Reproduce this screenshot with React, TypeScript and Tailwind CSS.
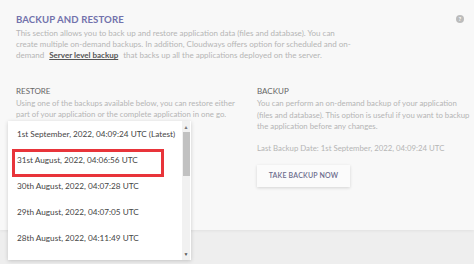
import { useState } from "react";

type Backup = {
  id: number;
  label: string;
};

const backups: Backup[] = [
  { id: 1, label: "1st September, 2022, 04:09:24 UTC (Latest)" },
  { id: 2, label: "31st August, 2022, 04:06:56 UTC" },
  { id: 3, label: "30th August, 2022, 04:07:28 UTC" },
  { id: 4, label: "29th August, 2022, 04:07:05 UTC" },
  { id: 5, label: "28th August, 2022, 04:11:49 UTC" },
];

const font = { fontFamily: "Lato, 'Open Sans', sans-serif" };

const BackupDropdown = () => {
  const [selected] = useState(2);

  return (
    <div className="absolute left-[8px] top-[121px] w-[183px] h-[139px] bg-white shadow-[0_1px_4px_rgba(0,0,0,0.18)] flex">
      <ul className="flex-1 flex flex-col">
        {backups.map((b) => (
          <li
            key={b.id}
            className="relative h-[26px] flex items-center pl-[9px] text-[8.2px] text-[#454545] whitespace-nowrap"
          >
            {b.label}
            {b.id === selected && (
              <span className="absolute left-[4px] top-[2px] w-[152px] h-[28px] border-[3px] border-[#e8343a]" />
            )}
          </li>
        ))}
      </ul>
      <div className="w-[8px] mr-[1px] bg-[#f1f1f1] flex flex-col items-center">
        <span className="mt-[4px] text-[5px] leading-none text-[#777]">▲</span>
        <div className="mt-[2px] w-[7px] h-[44px] bg-[#c1c1c1]" />
        <div className="flex-1" />
        <span className="mb-[3px] text-[5px] leading-none text-[#555]">▼</span>
      </div>
    </div>
  );
};

const App = () => {
  return (
    <div className="relative w-[474px] h-[264px] bg-[#eeeeee] overflow-hidden" style={font}>
      <div className="h-[230px] bg-[#f8f8f8] shadow-[0_1px_3px_rgba(0,0,0,0.06)] pl-4 pt-[13px]">
        <div className="flex items-start justify-between pr-[10px]">
          <h2 className="text-[9.6px] leading-[13px] font-bold text-[#7272ac] tracking-[0.1px]">
            BACKUP AND RESTORE
          </h2>
          <span className="mt-[2px] size-[8px] rounded-full bg-[#bcbcbc] text-white text-[6px] leading-[8px] text-center font-bold">
            ?
          </span>
        </div>
        <p className="mt-[2px] whitespace-nowrap text-[8px] leading-[11px] text-[#b5b5b5]">
          This section allows you to back up and restore application data (files and database). You can
          <br />
          create multiple on-demand backups. In addition, Cloudways offers option for scheduled and on-
          <br />
          demand
          <a className="mx-[5px] font-bold text-[#555] underline">Server level backup</a>
          that backs up all the applications deployed on the server.
        </p>

        <div className="mt-[25px] grid grid-cols-[225px_215px] gap-4">
          <div>
            <h3 className="text-[8px] leading-[11px] text-[#666]">RESTORE</h3>
            <p className="mt-[1px] text-[7.8px] leading-[11px] text-[#b5b5b5]">
              Using one of the backups available below, you can restore either part of your application
              or the complete application in one go.
            </p>
          </div>
          <div>
            <h3 className="text-[8px] leading-[11px] text-[#666]">BACKUP</h3>
            <p className="mt-[1px] text-[7.8px] leading-[11.5px] text-[#b5b5b5]">
              You can perform an on-demand backup of your application (files and database). This option
              is useful if you want to backup the application before any changes.
            </p>
            <p className="mt-[10px] text-[7.8px] leading-[11px] text-[#b5b5b5]">
              Last Backup Date: 1st September, 2022, 04:09:24 UTC
            </p>
            <button
              type="button"
              className="mt-[11px] w-[93px] h-[22px] bg-[#fbfbfb] shadow-[0_1px_3px_rgba(0,0,0,0.15)] text-[7px] font-semibold text-[#6b6b8c] tracking-[0.2px]"
            >
              TAKE BACKUP NOW
            </button>
          </div>
        </div>
      </div>
      <BackupDropdown />
    </div>
  );
};

export default App;
